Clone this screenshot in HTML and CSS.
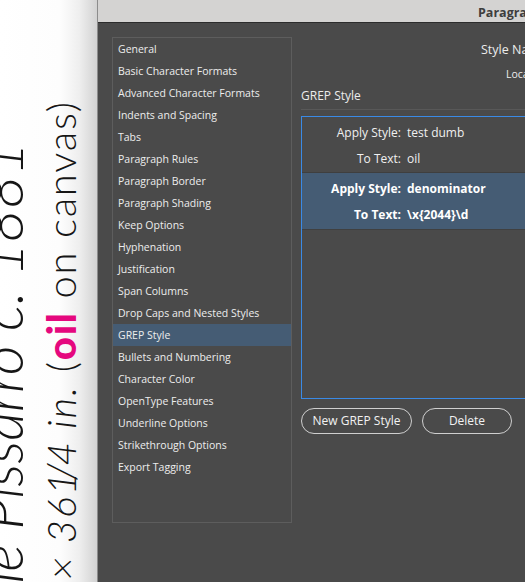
FILE: index.html
```html
<!DOCTYPE html>
<html lang="en">
<head>
<meta charset="utf-8">
<title>Paragraph Style Options</title>
<link rel="stylesheet" href="styles.css">
</head>
<body>
<div class="screen">
  <div class="artboard">
    <div class="caption">
      <div class="cap-line cap-title">Camille Pissarro c. 1881</div>
      <div class="cap-line cap-dims"><span class="it">28¾ × 36<span class="frac">1/</span>4 in.</span> (<span class="oil">oil</span> on canvas)</div>
    </div>
  </div>
  <div class="dialog">
    <div class="titlebar"><span class="title">Paragraph Style Options</span></div>
    <div class="body">
      <ul class="nav">
        <li>General</li>
        <li>Basic Character Formats</li>
        <li>Advanced Character Formats</li>
        <li>Indents and Spacing</li>
        <li>Tabs</li>
        <li>Paragraph Rules</li>
        <li>Paragraph Border</li>
        <li>Paragraph Shading</li>
        <li>Keep Options</li>
        <li>Hyphenation</li>
        <li>Justification</li>
        <li>Span Columns</li>
        <li>Drop Caps and Nested Styles</li>
        <li class="selected">GREP Style</li>
        <li>Bullets and Numbering</li>
        <li>Character Color</li>
        <li>OpenType Features</li>
        <li>Underline Options</li>
        <li>Strikethrough Options</li>
        <li>Export Tagging</li>
      </ul>
      <div class="content">
        <div class="field-name">Style Name:</div>
        <div class="field-loc">Location:</div>
        <div class="section-title">GREP Style</div>
        <div class="rule"></div>
        <div class="grep-list">
          <div class="grep-item">
            <div class="grep-row"><span class="g-label">Apply Style:</span><span class="g-value">test dumb</span></div>
            <div class="grep-row"><span class="g-label">To Text:</span><span class="g-value">oil</span></div>
          </div>
          <div class="grep-item active">
            <div class="grep-row"><span class="g-label">Apply Style:</span><span class="g-value">denominator</span></div>
            <div class="grep-row"><span class="g-label">To Text:</span><span class="g-value">\x{2044}\d</span></div>
          </div>
        </div>
        <div class="buttons">
          <button class="pill pill-new">New GREP Style</button>
          <button class="pill pill-del">Delete</button>
        </div>
      </div>
    </div>
  </div>
</div>
</body>
</html>
```
FILE: styles.css
```css
html, body {
  margin: 0;
  padding: 0;
}
body {
  width: 525px;
  height: 582px;
  overflow: hidden;
  font-family: "Open Sans", "Noto Sans", sans-serif;
}
.screen {
  display: flex;
  width: 525px;
  height: 582px;
  overflow: hidden;
}
.artboard {
  position: relative;
  flex: 0 0 97px;
  overflow: hidden;
  background: linear-gradient(to right, #ffffff 0%, #fdfdfd 62%, #eeeeee 82%, #d2d2d2 100%);
}
.caption {
  position: absolute;
  left: -28px;
  top: 1000px;
  width: 900px;
  transform-origin: 0 0;
  transform: rotate(-90deg);
  font-family: "Lato", "DejaVu Sans", sans-serif;
  font-weight: 300;
  color: #161616;
  text-align: right;
  white-space: nowrap;
}
.cap-title {
  font-size: 58px;
  line-height: 58px;
  font-style: italic;
  padding-right: 42px;
}
.cap-dims {
  font-size: 40px;
  line-height: 40px;
  margin-top: 11px;
  letter-spacing: 1.8px;
}
.cap-dims .it {
  font-style: italic;
}
.cap-dims .frac {
  letter-spacing: -8px;
  margin-right: 6px;
}
.cap-dims .oil {
  color: #e5087e;
  font-weight: 900;
}
.dialog {
  flex: 1 1 auto;
  display: flex;
  flex-direction: column;
  border-left: 1px solid #8c8c8c;
  background: #4a4a4a;
  min-width: 0;
}
.titlebar {
  flex: 0 0 22px;
  background: #d4d3d2;
  border-bottom: 1px solid #2c2c2c;
  padding-left: 380px;
  white-space: nowrap;
  overflow: hidden;
  line-height: 22px;
}
.title {
  font-size: 12.5px;
  font-weight: 700;
  color: #3e3e3e;
}
.body {
  flex: 1 1 auto;
  display: flex;
  padding: 14px 0 0 14px;
  overflow: hidden;
}
.nav {
  list-style: none;
  margin: 0;
  padding: 0;
  flex: 0 0 auto;
  width: 178px;
  height: 484px;
  border: 1px solid #5d5d5d;
}
.nav li {
  height: 22px;
  line-height: 22px;
  padding-left: 5px;
  font-size: 10.5px;
  color: #ededed;
  white-space: nowrap;
}
.nav li.selected {
  background: #455c74;
}
.content {
  flex: 0 0 300px;
  margin-left: 9px;
  display: flex;
  flex-direction: column;
  color: #ececec;
}
.field-name {
  height: 26px;
  line-height: 26px;
  padding-left: 180px;
  font-size: 12.5px;
  white-space: nowrap;
}
.field-loc {
  height: 22px;
  line-height: 22px;
  padding-left: 205px;
  font-size: 10.5px;
  white-space: nowrap;
}
.section-title {
  height: 21px;
  line-height: 21px;
  font-size: 12px;
}
.rule {
  margin-top: 3px;
  height: 1px;
  background: #585858;
}
.grep-list {
  margin-top: 6px;
  height: 281px;
  border: 1px solid #3a8ae6;
}
.grep-item {
  padding: 3px 0 0;
}
.grep-item.active {
  background: #455c74;
  padding: 3px 0 1px;
  border-top: 1px solid #3f3f3f;
  border-bottom: 1px solid #404040;
}
.grep-row {
  display: flex;
  height: 26px;
  line-height: 26px;
  font-size: 12px;
  color: #f0f0f0;
  white-space: nowrap;
}
.g-label {
  flex: 0 0 99px;
  text-align: right;
}
.g-value {
  margin-left: 6px;
}
.grep-item.active .grep-row {
  font-weight: 700;
  color: #ffffff;
}
.buttons {
  display: flex;
  gap: 10px;
  margin-top: 9px;
}
.pill {
  height: 26px;
  padding: 0;
  border: 1px solid #cfcfcf;
  border-radius: 13px;
  background: transparent;
  color: #f2f2f2;
  font-family: "Open Sans", "Noto Sans", sans-serif;
  font-size: 12px;
  line-height: 24px;
}
.pill-new {
  width: 111px;
}
.pill-del {
  width: 90px;
}
```
